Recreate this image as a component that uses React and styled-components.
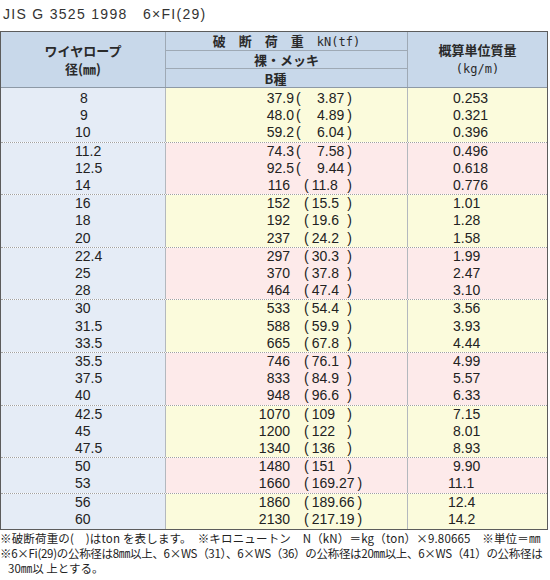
import React from "react";
import styled, { createGlobalStyle } from "styled-components";

const GlobalStyle = createGlobalStyle`
  body {
    margin: 0;
    background: #fff;
    color: #222;
    font-family: "Liberation Sans", Arial, sans-serif;
  }
`;

const groups = [
  [["8", "37.9", "3.87", "0.253"], ["9", "48.0", "4.89", "0.321"], ["10", "59.2", "6.04", "0.396"]],
  [["11.2", "74.3", "7.58", "0.496"], ["12.5", "92.5", "9.44", "0.618"], ["14", "116", "11.8", "0.776"]],
  [["16", "152", "15.5", "1.01"], ["18", "192", "19.6", "1.28"], ["20", "237", "24.2", "1.58"]],
  [["22.4", "297", "30.3", "1.99"], ["25", "370", "37.8", "2.47"], ["28", "464", "47.4", "3.10"]],
  [["30", "533", "54.4", "3.56"], ["31.5", "588", "59.9", "3.93"], ["33.5", "665", "67.8", "4.44"]],
  [["35.5", "746", "76.1", "4.99"], ["37.5", "833", "84.9", "5.57"], ["40", "948", "96.6", "6.33"]],
  [["42.5", "1070", "109", "7.15"], ["45", "1200", "122", "8.01"], ["47.5", "1340", "136", "8.93"]],
  [["50", "1480", "151", "9.90"], ["53", "1660", "169.27", "11.1"]],
  [["56", "1860", "189.66", "12.4"], ["60", "2130", "217.19", "14.2"]],
];

const Page = styled.div`
  width: 550px;
`;

const Title = styled.div`
  height: 31px;
  line-height: 28px;
  padding-left: 3px;
  font-size: 14px;
  letter-spacing: 1.3px;
  color: #333;
  white-space: pre;
`;

const Table = styled.div`
  width: 548px;
  box-sizing: border-box;
  border: 1px solid #5c5c5c;
`;

const Header = styled.div`
  display: grid;
  grid-template-columns: 165px 242px 1fr;
  grid-template-rows: 19px 18px 18px;
  background: #c8d8ea;
  border-bottom: 1px solid #8d99a6;
`;

const HeadCell = styled.div`
  display: flex;
  flex-direction: column;
  align-items: center;
  justify-content: center;
  box-sizing: border-box;
  grid-row: ${(p) => (p.$span ? "1 / 4" : "auto")};
  grid-column: ${(p) => p.$col};
  padding-right: ${(p) => p.$shift || 0}px;
  border-right: ${(p) => (p.$last ? "none" : "1px solid #9ea9b5")};
  border-bottom: ${(p) => (p.$line ? "1px solid #9ea9b5" : "none")};
  font-family: "Noto Sans CJK JP", sans-serif;
  font-weight: 700;
  font-size: 13px;
  line-height: 17px;
  color: #2a2a2a;
  white-space: pre;
`;

const HeadLine = styled.span`
  display: block;
  line-height: 18px;
`;

const Mono = styled.span`
  font-family: "DejaVu Sans Mono", monospace;
  font-weight: 400;
  font-size: 12px;
`;

const Group = styled.div`
  display: grid;
  grid-template-columns: 165px 242px 1fr;
  border-top: ${(p) => (p.$first ? "none" : "1px dotted #a0a0a0")};
`;

const Cell = styled.div`
  background: ${(p) => p.$bg};
  padding-top: ${(p) => p.$top || 0}px;
  padding-bottom: ${(p) => p.$bottom || 0}px;
  border-right: ${(p) => (p.$last ? "none" : "1px solid #b3b8be")};
  font-size: 14px;
  line-height: 17.2px;
`;

const Line = styled.div`
  padding-left: ${(p) => p.$left}px;
  white-space: nowrap;
`;

const LoadLine = styled.div`
  display: flex;
  padding-left: 70px;
  white-space: nowrap;
`;

const Num = styled.span`
  width: 58px;
  box-sizing: border-box;
  padding-right: ${(p) => (p.$wide ? 4 : 0)}px;
  text-align: right;
`;

const Paren = styled.span`
  display: flex;
  width: 58px;
`;

const Open = styled.span`
  margin-left: ${(p) => (p.$wide ? 10 : 2)}px;
`;

const Inner = styled.span`
  flex: 1;
  text-align: ${(p) => (p.$wide ? "left" : "right")};
  padding-left: ${(p) => (p.$wide ? 3 : 0)}px;
`;

const Close = styled.span`
  margin-left: 3px;
`;

const Notes = styled.div`
  padding-top: 1px;
  font-family: "Noto Sans CJK JP", sans-serif;
  font-size: 11.5px;
  line-height: 15px;
  color: #222;
  white-space: pre;
`;

const Note = styled.div`
  letter-spacing: ${(p) => p.$ls || 0}px;
  padding-left: ${(p) => p.$indent || 0}px;
`;

const LoadValue = ({ kn, tf }) => {
  const wide = parseFloat(kn) >= 100;
  return (
    <LoadLine>
      <Num $wide={wide}>{kn}</Num>
      <Paren>
        <Open $wide={wide}>(</Open>
        <Inner $wide={wide}>{tf}</Inner>
        <Close>)</Close>
      </Paren>
    </LoadLine>
  );
};

const App = () => {
  return (
    <Page>
      <GlobalStyle />
      <Title>JIS G 3525 1998　6×FI(29)</Title>
      <Table>
        <Header>
          <HeadCell $span $col="1">
            <HeadLine>ワイヤロープ</HeadLine>
            <HeadLine>径(㎜)</HeadLine>
          </HeadCell>
          <HeadCell $col="2" $line>
            <span>
              破　断　荷　重　<Mono>kN(tf)</Mono>
            </span>
          </HeadCell>
          <HeadCell $col="2" $line>裸・メッキ</HeadCell>
          <HeadCell $col="2" $shift={22}>B種</HeadCell>
          <HeadCell $span $col="3" $last>
            <HeadLine>概算単位質量</HeadLine>
            <HeadLine>
              <Mono>(kg/m)</Mono>
            </HeadLine>
          </HeadCell>
        </Header>
        {groups.map((rows, i) => {
          const bg = i % 2 === 0 ? "#fbfbdc" : "#fdeaea";
          const top = i === 0 ? 2 : 0;
          const bottom = i === groups.length - 1 ? 1 : 0;
          return (
            <Group key={i} $first={i === 0}>
              <Cell $bg="#e5ecf6" $top={top} $bottom={bottom}>
                {rows.map((r) => (
                  <Line key={r[0]} $left={parseFloat(r[0]) < 10 ? 79 : 74}>
                    {r[0]}
                  </Line>
                ))}
              </Cell>
              <Cell $bg={bg} $top={top} $bottom={bottom}>
                {rows.map((r) => (
                  <LoadValue key={r[0]} kn={r[1]} tf={r[2]} />
                ))}
              </Cell>
              <Cell $bg={bg} $top={top} $bottom={bottom} $last>
                {rows.map((r) => (
                  <Line key={r[0]} $left={parseFloat(r[3]) < 10 ? 45 : 40}>
                    {r[3]}
                  </Line>
                ))}
              </Cell>
            </Group>
          );
        })}
      </Table>
      <Notes>
        <Note $ls={0.17}>※破断荷重の(　)はton を表します。　※キロニュートン　N（kN）＝kg（ton）×9.80665　※単位＝㎜</Note>
        <Note $ls={-0.3}>※6×Fi(29)の公称径は8㎜以上、6×WS（31）、6×WS（36）の公称径は20㎜以上、6×WS（41）の公称径は</Note>
        <Note $indent={8}>30㎜以 上とする。</Note>
      </Notes>
    </Page>
  );
};

export default App;
